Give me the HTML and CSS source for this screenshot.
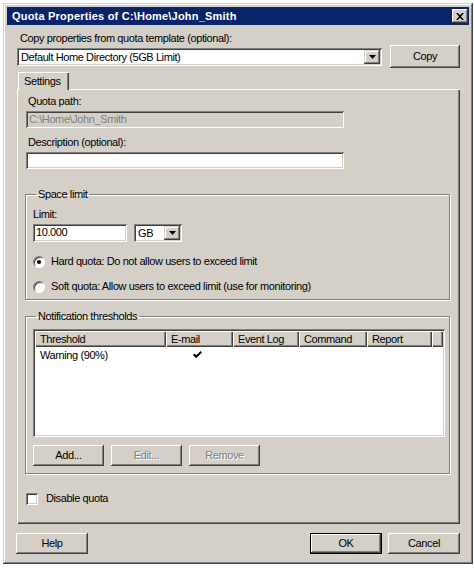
FILE: index.html
```html
<!DOCTYPE html>
<html>
<head>
<meta charset="utf-8">
<title>Quota Properties</title>
<link rel="stylesheet" href="styles.css">
</head>
<body>
<div class="window">
  <div class="titlebar">
    <span class="title">Quota Properties of C:\Home\John_Smith</span>
    <span class="close-btn">
      <svg width="8" height="7" viewBox="0 0 8 7"><path d="M0 0h2l2 2.3L6 0h2L5 3.5 8 7H6L4 4.7 2 7H0l3-3.5z" fill="#000"/></svg>
    </span>
  </div>
  <div class="client">
    <div class="label copy-label">Copy properties from quota template (optional):</div>
    <div class="template-row">
      <div class="combo template-combo">
        <span class="combo-text">Default Home Directory (5GB Limit)</span>
        <span class="combo-btn"><svg width="7" height="4" viewBox="0 0 7 4"><path d="M0 0h7L3.5 4z" fill="#000"/></svg></span>
      </div>
      <div class="btn copy-btn">Copy</div>
    </div>
    <div class="tabs"><div class="tab">Settings</div></div>
    <div class="panel">
      <div class="label">Quota path:</div>
      <div class="edit disabled path-edit">C:\Home\John_Smith</div>
      <div class="label desc-label">Description (optional):</div>
      <div class="edit desc-edit"></div>

      <fieldset class="group space-group">
        <legend>Space limit</legend>
        <div class="label limit-label">Limit:</div>
        <div class="limit-row">
          <div class="edit limit-edit">10.000</div>
          <div class="combo unit-combo">
            <span class="combo-text">GB</span>
            <span class="combo-btn"><svg width="7" height="4" viewBox="0 0 7 4"><path d="M0 0h7L3.5 4z" fill="#000"/></svg></span>
          </div>
        </div>
        <div class="radio-row hard-row"><span class="radio checked"></span><span>Hard quota: Do not allow users to exceed limit</span></div>
        <div class="radio-row soft-row"><span class="radio"></span><span>Soft quota: Allow users to exceed limit (use for monitoring)</span></div>
      </fieldset>

      <fieldset class="group notify-group">
        <legend>Notification thresholds</legend>
        <div class="listview">
          <div class="lv-header">
            <div class="lv-col c-threshold">Threshold</div>
            <div class="lv-col c-email">E-mail</div>
            <div class="lv-col c-event">Event Log</div>
            <div class="lv-col c-command">Command</div>
            <div class="lv-col c-report">Report</div>
            <div class="lv-col c-fill"></div>
          </div>
          <div class="lv-row">
            <div class="lv-cell c-threshold">Warning (90%)</div>
            <div class="lv-cell c-email check-cell"><svg width="9" height="8" viewBox="0 0 9 8"><path d="M0 4l1.5-1.5L3.2 4.3 7.5 0 9 1.5 3.2 7.3z" fill="#000"/></svg></div>
          </div>
        </div>
        <div class="button-row">
          <div class="btn">Add...</div>
          <div class="btn disabled">Edit...</div>
          <div class="btn disabled">Remove</div>
        </div>
      </fieldset>

      <div class="check-row"><span class="checkbox"></span><span>Disable quota</span></div>
    </div>
    <div class="footer">
      <div class="btn">Help</div>
      <div class="footer-right">
        <div class="btn default">OK</div>
        <div class="btn">Cancel</div>
      </div>
    </div>
  </div>
</div>
</body>
</html>
```
FILE: styles.css
```css
* { box-sizing: border-box; }

html, body {
  margin: 0;
  padding: 0;
  background: #fff;
}

body {
  width: 474px;
  height: 569px;
  font-family: "Liberation Sans", Arial, sans-serif;
  font-size: 11px;
  line-height: 13px;
  letter-spacing: -0.4px;
  color: #000;
}

/* dialog frame */
.window {
  margin: 3px 0 0 3px;
  width: 470px;
  height: 561px;
  background: #d4d0c8;
  padding: 4px;
  box-shadow: inset -1px -1px #404040, inset 1px 1px #d4d0c8,
              inset -2px -2px #808080, inset 2px 2px #fff;
  display: flex;
  flex-direction: column;
}

.titlebar {
  height: 18px;
  background: #0a246a;
  color: #fff;
  font-weight: bold;
  letter-spacing: 0.2px;
  display: flex;
  align-items: center;
  justify-content: space-between;
  padding: 0 1px 0 5px;
}

.close-btn {
  width: 16px;
  height: 14px;
  background: #d4d0c8;
  display: flex;
  align-items: center;
  justify-content: center;
  box-shadow: inset -1px -1px #404040, inset 1px 1px #fff,
              inset -2px -2px #808080;
}

.client {
  flex: 1;
  display: flex;
  flex-direction: column;
  padding: 0 9px 0 10px;
}

.copy-label {
  margin-top: 7px;
  padding-left: 3px;
}

.template-row {
  display: flex;
  align-items: center;
  gap: 8px;
}

/* sunken edit and combo boxes */
.edit, .combo {
  background: #fff;
  height: 18px;
  box-shadow: inset 1px 1px #808080, inset -1px -1px #fff,
              inset 2px 2px #404040, inset -2px -2px #d4d0c8;
}

.edit {
  padding: 2px 3px;
  white-space: nowrap;
}

.edit.disabled {
  background: #d4d0c8;
  color: #808080;
}

.combo {
  display: flex;
  align-items: stretch;
  padding: 2px;
}

.combo-text {
  flex: 1;
  padding: 0 2px;
  line-height: 14px;
}

.combo-btn {
  width: 16px;
  background: #d4d0c8;
  display: flex;
  align-items: center;
  justify-content: center;
  box-shadow: inset -1px -1px #404040, inset 1px 1px #d4d0c8,
              inset -2px -2px #808080, inset 2px 2px #fff;
}

.template-combo { width: 365px; }

/* push buttons */
.btn {
  width: 71px;
  height: 21px;
  display: flex;
  align-items: center;
  justify-content: center;
  background: #d4d0c8;
  box-shadow: inset -1px -1px #404040, inset 1px 1px #fff,
              inset -2px -2px #808080, inset 2px 2px #d4d0c8;
}

.btn.disabled {
  color: #808080;
  text-shadow: 1px 1px 0 #fff;
}

.btn.default {
  box-shadow: inset 0 0 0 1px #000,
              inset -2px -2px #404040, inset 2px 2px #fff,
              inset -3px -3px #808080;
}

.copy-btn {
  width: 70px;
  height: 23px;
}

/* tab strip */
.tabs {
  margin-top: 4px;
  display: flex;
  padding-left: 1px;
}

.tab {
  height: 18px;
  padding: 3px 6px 0 6px;
  background: #d4d0c8;
  position: relative;
  z-index: 1;
  box-shadow: inset 1px 1px #fff, inset -1px 0 #404040, inset -2px 0 #808080;
  width: 51px;
}

.panel {
  margin-top: -1px;
  height: 435px;
  padding: 6px 0 0 9px;
  box-shadow: inset 1px 1px #fff, inset -1px -1px #404040,
              inset -2px -2px #808080;
}

.panel > .label { padding-left: 2px; }

.path-edit {
  margin-top: 3px;
  width: 318px;
  height: 17px;
  padding-top: 2px;
}

.desc-label { margin-top: 8px; }

.desc-edit {
  margin-top: 3px;
  width: 318px;
  height: 17px;
}

/* group boxes */
.group {
  margin: 0;
  padding: 0 0 0 7px;
  width: 425px;
  margin-left: -1px;
  border: 1px solid #808080;
  box-shadow: inset 1px 1px #fff, 1px 1px #fff;
}

.group legend {
  padding: 0 2px;
  margin-left: 3px;
}

.space-group {
  margin-top: 19px;
  height: 112px;
}

.limit-label { margin-top: 7px; }

.limit-row {
  display: flex;
  gap: 7px;
  margin-top: 3px;
}

.limit-edit { width: 94px; }

.unit-combo { width: 48px; }

.radio-row {
  display: flex;
  align-items: center;
  gap: 6px;
  height: 13px;
}

.hard-row { margin-top: 13px; }
.soft-row { margin-top: 12px; }

.radio {
  width: 12px;
  height: 12px;
  border-radius: 50%;
  background: #fff;
  border: 1px solid;
  border-color: #808080 #fff #fff #808080;
  box-shadow: inset 1px 1px #404040;
  position: relative;
  flex: none;
}

.radio.checked::after {
  content: "";
  position: absolute;
  left: 3px;
  top: 3px;
  width: 4px;
  height: 4px;
  border-radius: 50%;
  background: #000;
}

.notify-group {
  margin-top: 10px;
  height: 164px;
}

/* threshold list */
.listview {
  margin-top: 6px;
  width: 412px;
  height: 108px;
  background: #fff;
  padding: 2px;
  box-shadow: inset 1px 1px #808080, inset -1px -1px #fff,
              inset 2px 2px #404040, inset -2px -2px #d4d0c8;
}

.lv-header {
  display: flex;
  height: 16px;
}

.lv-col {
  background: #d4d0c8;
  padding: 2px 6px 0 5px;
  white-space: nowrap;
  box-shadow: inset 1px 1px #fff, inset -1px -1px #404040,
              inset -2px -2px #808080;
}

.c-threshold { width: 131px; }
.c-email { width: 67px; }
.c-event { width: 66px; }
.c-command { width: 68px; }
.c-report { width: 65px; }
.c-fill { flex: 1; }

.lv-row {
  display: flex;
  height: 16px;
  align-items: center;
  margin-top: 0;
}

.lv-cell { padding: 0 6px 0 5px; }

.check-cell {
  display: flex;
  justify-content: flex-start;
  padding-left: 27px;
}

.button-row {
  display: flex;
  gap: 7px;
  margin-top: 8px;
}

.check-row {
  display: flex;
  align-items: center;
  gap: 8px;
  margin-top: 18px;
}

.checkbox {
  width: 12px;
  height: 12px;
  background: #fff;
  box-shadow: inset 1px 1px #808080, inset -1px -1px #fff,
              inset 2px 2px #404040, inset -2px -2px #d4d0c8;
  flex: none;
}

.footer {
  margin-top: 9px;
  display: flex;
  justify-content: space-between;
  margin-left: -1px;
}

.footer-right {
  display: flex;
  gap: 6px;
}

.footer .btn { width: 72px; }
```
